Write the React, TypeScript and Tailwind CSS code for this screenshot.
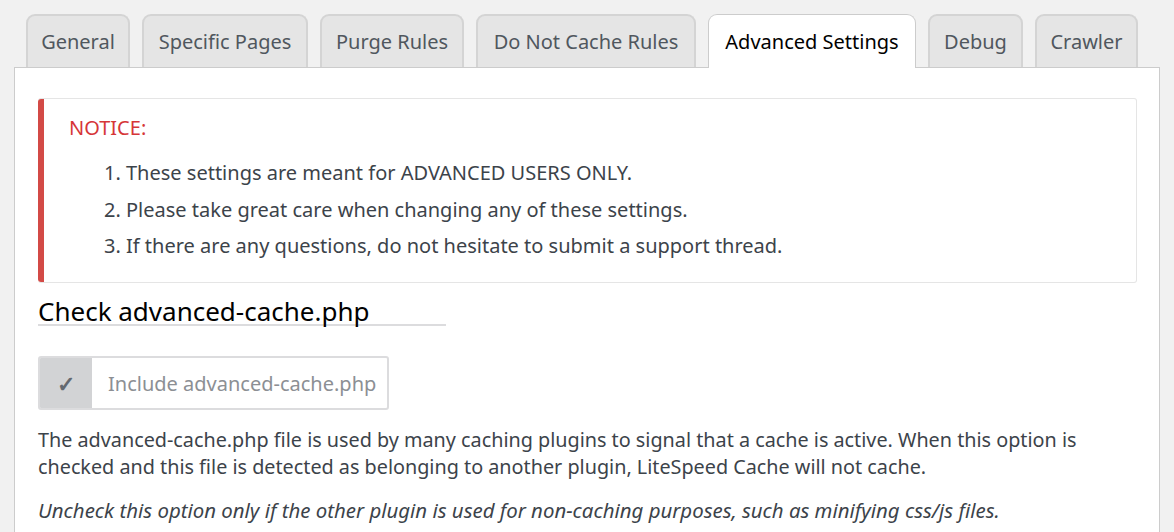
import React from "react";

const tabs = [
  { label: "General", w: "w-[104px]" },
  { label: "Specific Pages", w: "w-[166px]" },
  { label: "Purge Rules", w: "w-[144px]" },
  { label: "Do Not Cache Rules", w: "w-[220px]" },
  { label: "Advanced Settings", w: "w-[208px]", active: true },
  { label: "Debug", w: "w-[95px]" },
  { label: "Crawler", w: "w-[103px]" },
];

export default function App() {
  return (
    <div
      className="w-[1174px] h-[532px] overflow-hidden bg-[#f1f1f1] text-[#3c434a]"
      style={{ fontFamily: '"Noto Sans", "Open Sans", sans-serif' }}
    >
      <div className="pl-[14px] pt-[14px] w-[1160px]">
        <div className="flex gap-[12px] pl-[12px] relative z-10">
          {tabs.map((t) =>
            t.active ? (
              <div
                key={t.label}
                className={`${t.w} h-[54px] -mb-px flex items-center justify-center rounded-t-[9px] border border-b-0 border-[#cccccc] bg-white text-[20px] text-black`}
              >
                {t.label}
              </div>
            ) : (
              <div
                key={t.label}
                className={`${t.w} h-[53px] flex items-center justify-center rounded-t-[9px] border-2 border-b-0 border-[#d4d4d4] bg-[#e5e5e5] text-[20px] text-[#50575e]`}
              >
                {t.label}
              </div>
            )
          )}
        </div>
        <div className="border border-[#cccccc] bg-white pl-[23px] pr-[22px] pt-[30px] h-[480px]">
          <div className="flex rounded-[3px] border border-[#e5e5e5] border-l-0 h-[185px]">
            <div className="w-[6px] bg-[#d34a46] rounded-l-[3px]" />
            <div className="pl-[25px] pt-[16px]">
              <div className="text-[20px] leading-[26px] text-[#d63638]">NOTICE:</div>
              <ol className="mt-[14px] pl-[35px] text-[20px] leading-[36.5px] list-none">
                <li>1. These settings are meant for ADVANCED USERS ONLY.</li>
                <li>2. Please take great care when changing any of these settings.</li>
                <li>3. If there are any questions, do not hesitate to submit a support thread.</li>
              </ol>
            </div>
          </div>
          <div className="mt-[15px] w-[408px] border-b-2 border-[#dcdcde] text-[26px] leading-[26px] text-black">
            Check advanced-cache.php
          </div>
          <div className="mt-[30px] flex w-[351px] h-[54px] rounded-[3px] border-2 border-[#dcdcde] overflow-hidden">
            <div className="w-[52px] bg-[#d2d3d5] flex items-center justify-center text-[22px] font-bold text-[#646970]">
              ✓
            </div>
            <div className="flex items-center pl-[16px] pt-[2px] text-[20px] text-[#8c8f94]">
              Include advanced-cache.php
            </div>
          </div>
          <p className="mt-[16px] text-[19.8px] leading-[27px]">
            The advanced-cache.php file is used by many caching plugins to signal that a cache is active. When this option is
            <br />
            checked and this file is detected as belonging to another plugin, LiteSpeed Cache will not cache.
          </p>
          <p className="mt-[17px] text-[20.4px] leading-[27px] italic">
            Uncheck this option only if the other plugin is used for non-caching purposes, such as minifying css/js files.
          </p>
        </div>
      </div>
    </div>
  );
}
